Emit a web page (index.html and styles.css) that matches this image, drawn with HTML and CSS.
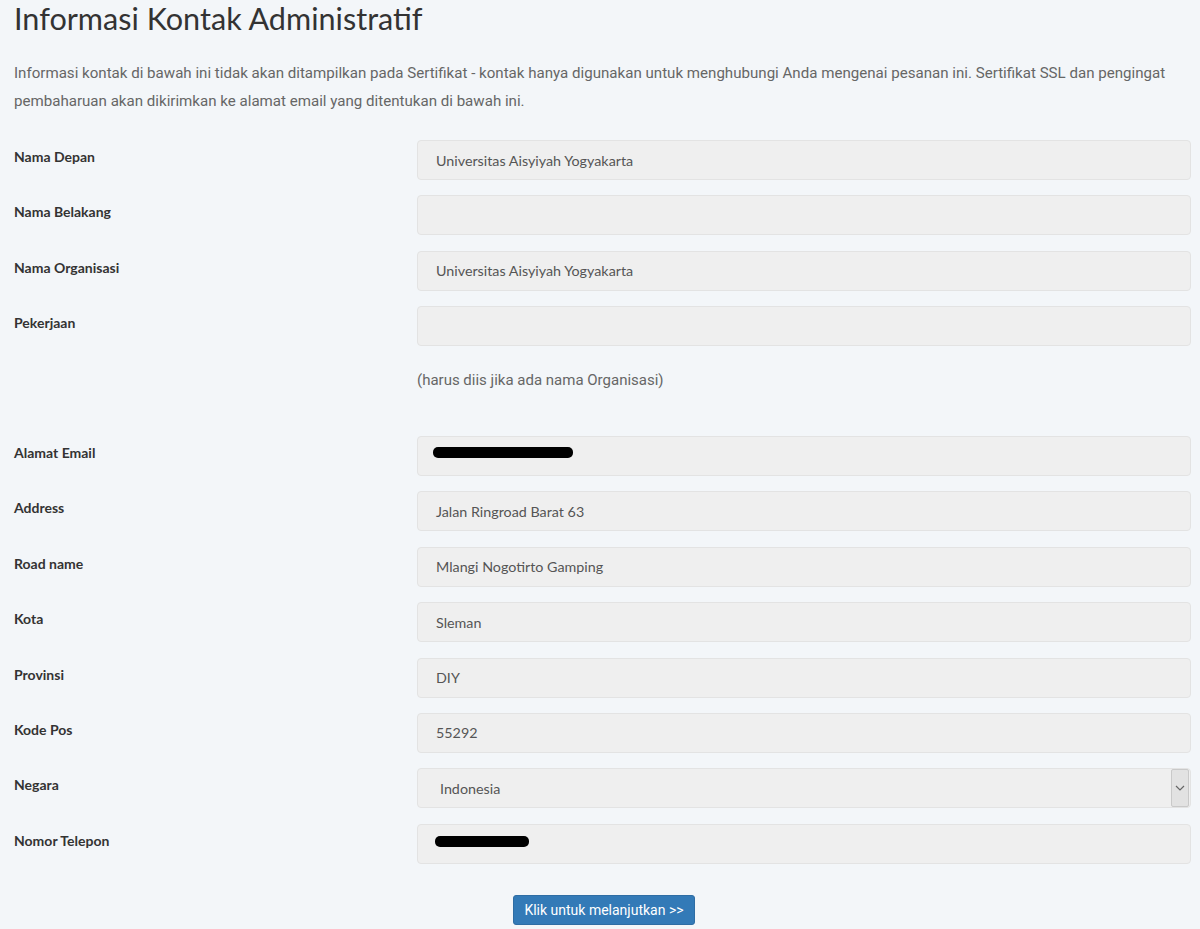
FILE: index.html
```html
<!DOCTYPE html>
<html lang="id">
<head>
<meta charset="utf-8">
<title>Informasi Kontak Administratif</title>
<link rel="stylesheet" href="styles.css">
</head>
<body>
<div class="page">
  <h1 class="title">Informasi Kontak Administratif</h1>
  <p class="intro">Informasi kontak di bawah ini tidak akan ditampilkan pada Sertifikat - kontak hanya digunakan untuk menghubungi Anda mengenai pesanan ini. Sertifikat SSL dan pengingat pembaharuan akan dikirimkan ke alamat email yang ditentukan di bawah ini.</p>

  <div class="form">
    <div class="row"><label class="lbl">Nama Depan</label><div class="field">Universitas Aisyiyah Yogyakarta</div></div>
    <div class="row"><label class="lbl">Nama Belakang</label><div class="field"></div></div>
    <div class="row"><label class="lbl">Nama Organisasi</label><div class="field">Universitas Aisyiyah Yogyakarta</div></div>
    <div class="row"><label class="lbl">Pekerjaan</label><div class="field"></div></div>
    <div class="hint-row"><span></span><div class="hint">(harus diis jika ada nama Organisasi)</div></div>
    <div class="row"><label class="lbl">Alamat Email</label><div class="field"><span class="redact redact-email"></span></div></div>
    <div class="row"><label class="lbl">Address</label><div class="field">Jalan Ringroad Barat 63</div></div>
    <div class="row"><label class="lbl">Road name</label><div class="field">Mlangi Nogotirto Gamping</div></div>
    <div class="row"><label class="lbl">Kota</label><div class="field">Sleman</div></div>
    <div class="row"><label class="lbl">Provinsi</label><div class="field">DIY</div></div>
    <div class="row"><label class="lbl">Kode Pos</label><div class="field">55292</div></div>
    <div class="row"><label class="lbl">Negara</label>
      <div class="field select"><span class="select-val">Indonesia</span>
        <span class="select-btn"><svg width="10" height="6" viewBox="0 0 10 6"><path d="M1 1 L5 5 L9 1" fill="none" stroke="#666" stroke-width="1.2"/></svg></span>
      </div>
    </div>
    <div class="row"><label class="lbl">Nomor Telepon</label><div class="field"><span class="redact redact-phone"></span></div></div>
  </div>

  <div class="actions"><button class="btn">Klik untuk melanjutkan &gt;&gt;</button></div>
</div>
</body>
</html>
```

FILE: styles.css
```css
html, body {
  margin: 0;
  padding: 0;
  background: #f3f6f9;
}
.page {
  padding: 0 9px 0 14px;
}
.title {
  margin: 0;
  padding-top: 1px;
  font-family: Lato, "Open Sans", sans-serif;
  font-weight: 400;
  font-size: 30.6px;
  line-height: 36px;
  color: #333;
}
.intro {
  margin: 22px 0 0;
  font-family: Roboto, "Liberation Sans", sans-serif;
  font-size: 15.1px;
  line-height: 28px;
  color: #666;
}
.form {
  margin-top: 25px;
  display: flex;
  flex-direction: column;
  gap: 15.4px;
}
.row, .hint-row {
  display: grid;
  grid-template-columns: 403px 1fr;
}
.lbl {
  font-family: Lato, "Open Sans", sans-serif;
  font-weight: 700;
  font-size: 14px;
  line-height: 20px;
  color: #333;
  padding-top: 7px;
}
.field {
  height: 38px;
  box-sizing: content-box;
  border: 1px solid #e3e3e3;
  border-radius: 4px;
  background: #efefef;
  padding: 0 18px;
  display: flex;
  align-items: center;
  font-family: Lato, "Open Sans", sans-serif;
  font-size: 14.3px;
  color: #555;
}
.hint-row {
  padding: 8px 0 31px;
}
.hint {
  font-family: Roboto, "Liberation Sans", sans-serif;
  font-size: 15px;
  line-height: 20px;
  color: #666;
}
.select {
  padding: 0 0 0 22px;
  justify-content: space-between;
}
.select-btn {
  width: 16px;
  height: 36px;
  margin-right: 1px;
  border: 1px solid #c9c9c9;
  border-radius: 2px;
  background: #e2e2e2;
  display: flex;
  align-items: center;
  justify-content: center;
}
.redact {
  display: block;
  background: #000;
  border-radius: 5px;
}
.redact-email {
  width: 140px;
  height: 11px;
  margin-left: -3px;
  margin-top: -7px;
}
.redact-phone {
  width: 94px;
  height: 11px;
  margin-left: -1px;
  margin-top: -4px;
}
.actions {
  display: flex;
  justify-content: center;
  padding: 31px 0 0;
  margin-left: 3px;
}
.btn {
  font-family: Roboto, "Liberation Sans", sans-serif;
  font-size: 14px;
  color: #fff;
  background: #337ab7;
  border: 1px solid #2e6da4;
  border-radius: 3px;
  height: 30px;
  width: 182px;
  padding: 0;
}
```
